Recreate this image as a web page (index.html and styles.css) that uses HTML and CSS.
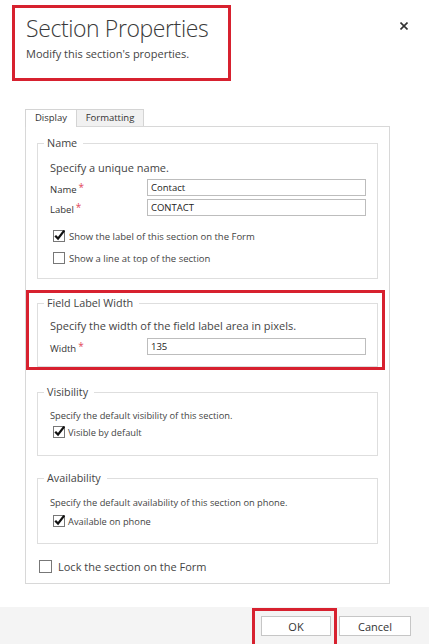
FILE: index.html
```html
<!DOCTYPE html>
<html lang="en">
<head>
    <meta charset="UTF-8">
    <meta name="viewport" content="width=device-width, initial-scale=1.0">
    <title>Section Properties</title>
    <link rel="stylesheet" href="styles.css">
</head>
<body>
    <!-- Dialog header -->
    <header class="dlg-head">
        <div class="mark head-mark">
            <h1 class="title">Section Properties</h1>
            <p class="subtitle">Modify this section's properties.</p>
        </div>
        <button class="close" title="Close">
            <svg width="8" height="8" viewBox="0 0 8 8"><path d="M0.5 0.5 L7.5 7.5 M7.5 0.5 L0.5 7.5" stroke="#333" stroke-width="1.6" fill="none"/></svg>
        </button>
    </header>

    <!-- Tabs and properties -->
    <main class="dlg-body">
        <div class="tabs">
            <span class="tab active">Display</span>
            <span class="tab">Formatting</span>
        </div>
        <div class="panel">
            <fieldset class="group">
                <legend>Name</legend>
                <p class="hint">Specify a unique name.</p>
                <div class="field first">
                    <label>Name<span class="req">*</span></label>
                    <input type="text" value="Contact">
                </div>
                <div class="field">
                    <label>Label<span class="req">*</span></label>
                    <input type="text" value="CONTACT">
                </div>
                <div class="check show-label">
                    <span class="box"><svg width="13" height="13" viewBox="0 0 13 13"><path d="M2.2 6.8 L5 9.6 L11.2 1.6" stroke="#111" stroke-width="2.3" fill="none"/></svg></span>
                    <span>Show the label of this section on the Form</span>
                </div>
                <div class="check show-line">
                    <span class="box"></span>
                    <span>Show a line at top of the section</span>
                </div>
            </fieldset>

            <div class="mark group-mark">
                <fieldset class="group width-group">
                    <legend>Field Label Width</legend>
                    <p class="hint">Specify the width of the field label area in pixels.</p>
                    <div class="field">
                        <label>Width<span class="req">*</span></label>
                        <input type="text" value="135">
                    </div>
                </fieldset>
            </div>

            <fieldset class="group vis-group">
                <legend>Visibility</legend>
                <p class="hint small">Specify the default visibility of this section.</p>
                <div class="check tight">
                    <span class="box"><svg width="13" height="13" viewBox="0 0 13 13"><path d="M2.2 6.8 L5 9.6 L11.2 1.6" stroke="#111" stroke-width="2.3" fill="none"/></svg></span>
                    <span>Visible by default</span>
                </div>
            </fieldset>

            <fieldset class="group avail-group">
                <legend>Availability</legend>
                <p class="hint small">Specify the default availability of this section on phone.</p>
                <div class="check tight">
                    <span class="box"><svg width="13" height="13" viewBox="0 0 13 13"><path d="M2.2 6.8 L5 9.6 L11.2 1.6" stroke="#111" stroke-width="2.3" fill="none"/></svg></span>
                    <span>Available on phone</span>
                </div>
            </fieldset>

            <div class="check lock">
                <span class="box"></span>
                <span>Lock the section on the Form</span>
            </div>
        </div>
    </main>

    <!-- Buttons -->
    <footer class="dlg-foot">
        <div class="mark ok-mark">
            <button class="btn ok">OK</button>
        </div>
        <button class="btn cancel">Cancel</button>
    </footer>
</body>
</html>
```

FILE: styles.css
```css
/* Base */
html, body {
    margin: 0;
    padding: 0;
}

body {
    width: 429px;
    height: 644px;
    overflow: hidden;
    display: flex;
    flex-direction: column;
    font-family: "Open Sans", "Noto Sans", sans-serif;
    color: #444;
    background-color: #fff;
}

/* Red highlight boxes */
.mark {
    border: 3px solid #d7212f;
}

/* Header */
.dlg-head {
    display: flex;
    justify-content: space-between;
    align-items: flex-start;
    padding: 5px 0 0 12px;
}

.head-mark {
    box-sizing: border-box;
    width: 219px;
    height: 76px;
    padding: 5px 0 0 11px;
}

.title {
    margin: 0;
    font-size: 23px;
    font-weight: 300;
    line-height: 30px;
    letter-spacing: -0.4px;
    color: #3a3a3a;
    white-space: nowrap;
}

.subtitle {
    margin: 3px 0 0;
    font-size: 11px;
    line-height: 15px;
    color: #444;
}

.close {
    display: block;
    width: 8px;
    height: 8px;
    margin: 17px 21px 0 0;
    padding: 0;
    border: 0;
    background: none;
    line-height: 0;
}

/* Tabs */
.dlg-body {
    padding: 28px 0 0 25px;
}

.tabs {
    display: flex;
    height: 17px;
}

.tab {
    box-sizing: border-box;
    height: 17px;
    border: 1px solid #d4d4d4;
    border-bottom: none;
    font-size: 9.5px;
    line-height: 16px;
    text-align: center;
    color: #333;
    background-color: #f1f1f1;
}

.tab.active {
    position: relative;
    z-index: 1;
    width: 52px;
    height: 18px;
    background-color: #fff;
}

.tab:not(.active) {
    width: 67px;
    border-left: none;
}

.panel {
    box-sizing: border-box;
    width: 365px;
    border: 1px solid #d8d8d8;
    padding: 9px 11px 9px 11px;
}

/* Groups */
.group {
    margin: 0;
    min-width: 0;
    border: 1px solid #dedede;
    padding: 0 11px 12px 12px;
}

.group legend {
    margin-left: -6px;
    padding: 0 6px 0 3px;
    font-size: 10.8px;
    line-height: 14px;
    color: #444;
}

.hint {
    margin: 10px 0 0;
    font-size: 11px;
    line-height: 16px;
    color: #444;
}

.hint.small {
    font-size: 9.3px;
    line-height: 14px;
}

.field {
    display: flex;
    align-items: center;
    height: 17px;
    margin-top: 3px;
}

.field label {
    width: 97px;
    flex: none;
    font-size: 9.5px;
    color: #333;
}

.req {
    margin-left: 2px;
    font-size: 10px;
    vertical-align: 2px;
    color: #e2475a;
}

.field input {
    flex: 1;
    min-width: 0;
    box-sizing: border-box;
    height: 17px;
    margin: 0;
    padding: 0 3px;
    border: 1px solid #bdbdbd;
    font-family: "Open Sans", "Noto Sans", sans-serif;
    font-size: 9.5px;
    color: #222;
    outline: none;
}

.check {
    display: flex;
    align-items: center;
    gap: 4px;
    height: 16px;
    padding-left: 3px;
    font-size: 9.5px;
    color: #444;
}

.check .box {
    box-sizing: border-box;
    width: 12px;
    height: 12px;
    flex: none;
    border: 1px solid #777;
    background-color: #fff;
    line-height: 0;
}

.check .box svg {
    margin: -2px 0 0 -1px;
}

.show-label {
    margin-top: 12px;
}

.show-line {
    margin-top: 6px;
}

/* Field label width group */
.group-mark {
    margin: 11px -7px 15px -11px;
    padding: 3px 4px 0 8px;
}

.width-group {
    padding-bottom: 11px;
}

.width-group .hint {
    margin-top: 8px;
}

.width-group .field {
    margin-top: 4px;
}

.vis-group {
    padding-bottom: 16px;
}

.check.tight {
    gap: 3px;
    height: 14px;
    margin-top: 2px;
    font-size: 9.3px;
}

.avail-group {
    margin-top: 15px;
    padding-bottom: 15px;
}

.avail-group .hint {
    margin-top: 11px;
}

.avail-group .check.tight {
    margin-top: 4px;
}

.check.lock {
    gap: 6px;
    margin-top: 14px;
    padding-left: 2px;
    font-size: 11px;
}

.check.lock .box {
    width: 13px;
    height: 13px;
}

/* Footer */
.dlg-foot {
    box-sizing: border-box;
    display: flex;
    justify-content: flex-end;
    align-items: flex-start;
    height: 37px;
    margin-top: auto;
    padding: 9px 18px 0 0;
    background-color: #f4f4f4;
}

.ok-mark {
    margin: -8px 2px 0 0;
    padding: 5px 3px 10px 6px;
}

.btn {
    display: block;
    box-sizing: border-box;
    height: 20px;
    margin: 0;
    padding: 0;
    border: 1px solid #c6c6c6;
    background-color: #fff;
    font-family: "Open Sans", "Noto Sans", sans-serif;
    font-size: 11px;
    color: #333;
}

.btn.ok {
    width: 70px;
}

.btn.cancel {
    width: 72px;
}
```
